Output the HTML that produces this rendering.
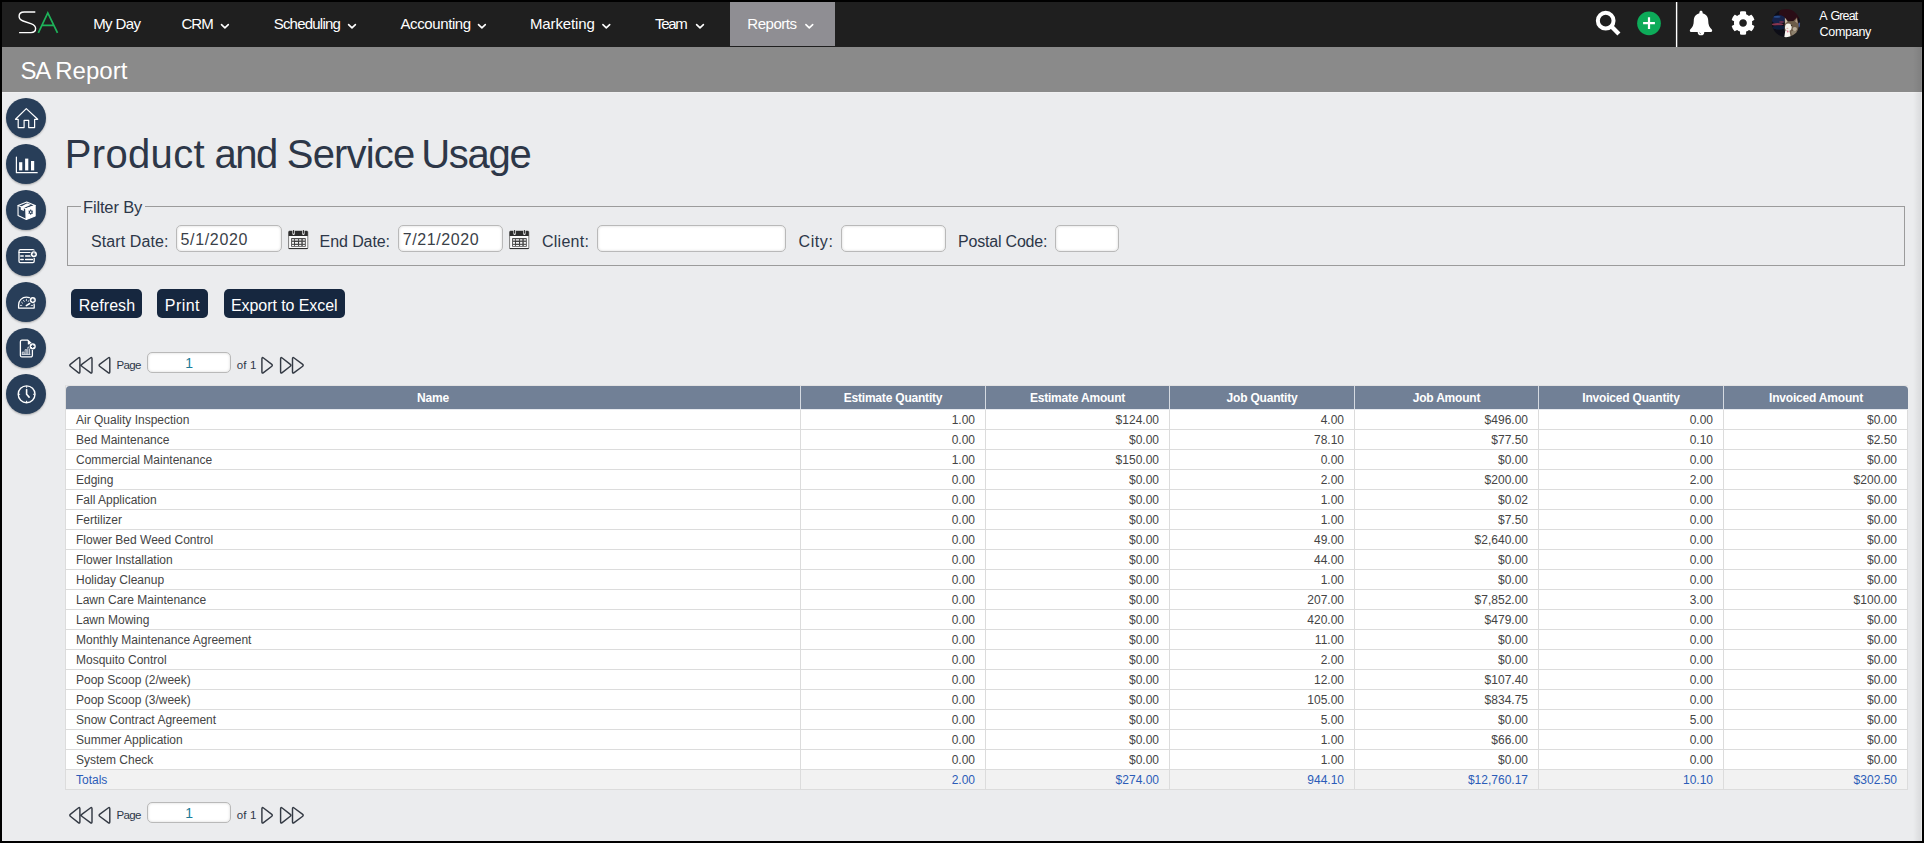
<!DOCTYPE html>
<html lang="en">
<head>
<meta charset="utf-8">
<title>SA Report - Product and Service Usage</title>
<style>
html,body{margin:0;padding:0;}
body{width:1924px;height:843px;overflow:hidden;background:#ebecee;font-family:"Liberation Sans",sans-serif;position:relative;}
.abs{position:absolute;}
.t{position:absolute;white-space:pre;font-family:"Liberation Sans",sans-serif;}
#nav{left:0;top:0;width:1924px;height:47px;background:#1f1f1f;}
#sub{left:0;top:47px;width:1924px;height:45px;background:#8a8a8a;}
#reports{left:730px;top:2px;width:105px;height:44px;background:#8f8e93;}
#vline{left:1676px;top:2px;width:2px;height:45px;background:#f4f4f4;}
.frame{position:absolute;background:#000;z-index:50;}
.side{position:absolute;left:6px;width:40px;height:40px;border-radius:50%;background:#283e59;box-shadow:0 1px 2px rgba(0,0,0,.28);}
.side svg{position:absolute;left:0;top:0;width:40px;height:40px;}
fieldset{position:absolute;left:67px;top:206px;width:1836px;height:58px;margin:0;padding:0;border:1px solid #9b9b9b;box-sizing:content-box;}
.inp{position:absolute;height:25px;top:225px;background:#fff;border:1px solid #b9b9b9;border-radius:5px;box-shadow:inset 0 0 3px rgba(0,0,0,.16);}
.btn{position:absolute;top:289px;height:29px;background:#16273f;border-radius:5px;}
.pinp{position:absolute;left:147px;width:82px;height:19px;background:#fff;border:1px solid #b9b9b9;border-radius:5px;box-shadow:inset 0 0 3px rgba(0,0,0,.16);}
table.grid{position:absolute;left:65px;top:385px;width:1843px;border-left:1px solid #dcdcdc;border-top:1px solid #e2e2e3;border-collapse:separate;border-spacing:0;table-layout:fixed;font-size:12px;color:#444;}
table.grid th{height:24px;padding:0;background:#718096;color:#fff;font-weight:700;font-size:12px;text-align:center;border-left:1px solid #d5dae1;border-bottom:1px solid #e6e9ee;box-sizing:border-box;letter-spacing:-0.2px;}
table.grid th:first-child{border-left:none;border-top-left-radius:4px;}
table.grid th:last-child{border-top-right-radius:4px;}
table.grid td{height:20px;padding:0 10px 0 0;background:#fff;text-align:right;border-left:1px solid #dcdcdc;border-bottom:1px solid #dcdcdc;box-sizing:border-box;line-height:17px;padding-top:2px;white-space:nowrap;}
table.grid td.n{text-align:left;padding:2px 0 0 10px;border-left:none;}
table.grid tr.tot td{background:#f2f2f2;color:#2b5cb8;}
table.grid td:last-child{border-right:1px solid #dcdcdc;}
</style>
</head>
<body>
<div id="nav" class="abs"></div>
<div id="reports" class="abs"></div>
<div id="sub" class="abs"></div>
<svg class="abs" style="left:0;top:0" width="1924" height="47" viewBox="0 0 1924 47">
<path d="M35.300 12H24.200C21.100 12 19.100 13.700 19.100 16.300 19.100 18.700 20.500 20.100 23.100 21L31.500 23.800C34.200 24.700 35.600 26.200 35.600 28.600 35.600 31.200 33.800 32.600 31 32.600H19.100" fill="none" stroke="#fff" stroke-width="1.400"/>
<path d="M38.300 32.900L47.800 12.900 57.500 32.900M41.900 25.300H53.800" fill="none" stroke="#1eb35a" stroke-width="1.700" stroke-linejoin="miter" stroke-miterlimit="10"/>
<g fill="none" stroke="#fff" stroke-width="1.600" stroke-linecap="round" stroke-linejoin="round"><path d="M221.5 24.600l3.400 3.300 3.400-3.300"/><path d="M348.6 24.600l3.400 3.300 3.400-3.300"/><path d="M478.5 24.600l3.400 3.300 3.400-3.300"/><path d="M602.9 24.600l3.400 3.300 3.400-3.300"/><path d="M696.6 24.600l3.400 3.300 3.400-3.300"/><path d="M805.9 24.600l3.400 3.300 3.400-3.300"/></g>
<rect x="1675.900" y="2" width="1.400" height="45" fill="#fff"/>
<circle cx="1605.700" cy="20.700" r="7.850" fill="none" stroke="#fff" stroke-width="4"/>
<path d="M1611 26L1618.900 33.900" stroke="#fff" stroke-width="4.300" stroke-linecap="butt"/>
<circle cx="1649" cy="23.300" r="11.850" fill="#0dab59"/>
<path d="M1649 17.300v11.800M1643.100 23.200h11.800" stroke="#fff" stroke-width="2.200"/>
<path fill="#fff" d="M1701 10.700c.9 0 1.600.7 1.600 1.600v.9c3.300.8 5.600 3.600 5.600 7.300 0 4.600 1.300 7 3.600 8.900.7.600.5 2.700-.9 2.700h-19.800c-1.400 0-1.600-2.100-.9-2.700 2.300-1.900 3.600-4.300 3.600-8.900 0-3.700 2.300-6.500 5.600-7.300v-.9c0-.9.7-1.600 1.600-1.600z"/>
<path fill="#fff" d="M1697.700 31.900a3.300 3.400 0 0 0 6.600 0z"/>
<path d="M1699.300 32.700l1.500 1.100" stroke="#1f1f1f" stroke-width=".6"/>
<g transform="translate(1730.900 10.800) scale(0.0475)">
<path fill="#fff" d="M487.400 315.700l-42.600-24.600c4.300-23.200 4.300-47 0-70.200l42.600-24.600c4.900-2.800 7.100-8.600 5.500-14-11.100-35.600-30-67.800-54.700-94.600-3.800-4.100-10-5.100-14.800-2.300L380.800 110c-17.900-15.400-38.500-27.300-60.800-35.100V25.800c0-5.600-3.900-10.500-9.400-11.700-36.700-8.200-74.300-7.800-109.200 0-5.500 1.200-9.400 6.100-9.400 11.700V75c-22.200 7.900-42.800 19.800-60.800 35.100L88.700 85.500c-4.900-2.800-11-1.900-14.800 2.300-24.700 26.700-43.600 58.900-54.700 94.600-1.700 5.400.6 11.200 5.500 14L67.300 221c-4.300 23.200-4.300 47 0 70.200l-42.600 24.600c-4.900 2.800-7.100 8.600-5.500 14 11.100 35.600 30 67.800 54.700 94.600 3.800 4.100 10 5.100 14.800 2.300l42.600-24.600c17.900 15.400 38.500 27.300 60.800 35.100v49.200c0 5.600 3.900 10.500 9.400 11.700 36.700 8.200 74.300 7.800 109.200 0 5.500-1.200 9.400-6.100 9.400-11.700v-49.200c22.200-7.900 42.800-19.800 60.800-35.100l42.600 24.600c4.900 2.800 11 1.900 14.800-2.300 24.700-26.700 43.600-58.900 54.700-94.600 1.500-5.500-.7-11.300-5.600-14.100zM256 336c-44.100 0-80-35.900-80-80s35.900-80 80-80 80 35.900 80 80-35.900 80-80 80z"/>
</g>
<defs><clipPath id="av"><circle cx="1786" cy="23.100" r="14.100"/></clipPath>
<filter id="avb" x="-10%" y="-10%" width="120%" height="120%"><feGaussianBlur stdDeviation="0.55"/></filter></defs>
<g clip-path="url(#av)"><g filter="url(#avb)">
<rect x="1770" y="7" width="32" height="32" fill="#100b16"/>
<ellipse cx="1790" cy="13.500" rx="11" ry="7.500" fill="#2b0a12"/>
<ellipse cx="1778.500" cy="19.500" rx="7" ry="4.500" fill="#13244a"/>
<ellipse cx="1777.500" cy="24.300" rx="6" ry="1.300" fill="#873650"/>
<ellipse cx="1779" cy="27.500" rx="6.500" ry="2.200" fill="#0f1c3a"/>
<ellipse cx="1781.500" cy="22" rx="2.500" ry="1" fill="#6a2c4c"/>
<ellipse cx="1777" cy="16.800" rx="3.500" ry=".9" fill="#2c4f8e"/>
<ellipse cx="1799.500" cy="25" rx="1.600" ry="2.600" fill="#3f5696"/>
<path d="M1784.800 17.400l3.200 3.800 5.300-.3 3.700-3.700 1.400 6.300c.6 3 .2 6-1.300 8.400l-2.600 3.200-6.700 2.800-3.200-8z" fill="#6d5b49"/>
<path d="M1796.600 18.200l1.100 5.200-2.600-1.800z" fill="#b39a84"/>
<path d="M1785 18l2.600 3.600-2.500 2.200z" fill="#cdbba6"/>
<ellipse cx="1788.300" cy="27.300" rx="3.300" ry="3.800" fill="#f3f0ea"/>
<path d="M1785.300 30.500h4.200l1.400 7.500h-6.700z" fill="#f7f5f1"/>
<path d="M1791 31.500l4.500-1.500 1.500 2.500-5 3z" fill="#8c806c"/>
<ellipse cx="1794.800" cy="29" rx="2.200" ry="2" fill="#b7ab98"/>
<ellipse cx="1787.400" cy="28.300" rx="1" ry=".55" fill="#d9a09a"/>
<ellipse cx="1787.700" cy="31.400" rx=".9" ry="1" fill="#e27a95"/>
<circle cx="1791.600" cy="25.400" r=".7" fill="#3a3228"/>
</g></g>
</svg>
<div class="side" style="top:98px"><svg viewBox="0 0 40 40"><path fill="none" stroke="#fff" stroke-width="1.2" stroke-linejoin="round" stroke-linecap="round" d="M20.300 10.600L9.500 21.300h2.700v8.300h5.900v-7.300h4.600v7.300h5.900v-8.300h3.100z"/></svg></div>
<div class="side" style="top:144px"><svg viewBox="0 0 40 40"><path fill="none" stroke="#fff" stroke-width="1.2" stroke-linejoin="round" stroke-linecap="round" d="M10.400 13v15.700h20.800"/><rect x="13.100" y="18.200" width="3.200" height="8.200" fill="#fff"/><rect x="19.100" y="14.600" width="3.200" height="11.800" fill="#fff"/><rect x="25" y="17" width="3.200" height="9.400" fill="#fff"/></svg></div>
<div class="side" style="top:190px"><svg viewBox="0 0 40 40"><g transform="translate(20.6 20.7) scale(.91) translate(-20.6 -20.6)"><path fill="none" stroke="#fff" stroke-width="1.2" stroke-linejoin="round" stroke-linecap="round" d="M11.200 15L20.700 11.100 30 15 19.900 18.400z"/><path fill="none" stroke="#fff" stroke-width="1.2" stroke-linejoin="round" stroke-linecap="round" d="M11.200 15v11l9.100 4.200-.4-11.800"/><path fill="#fff" stroke="#fff" stroke-width="1.200" stroke-linejoin="round" d="M19.900 18.400L30 15v11.400l-9.700 3.800z"/><path fill="#fff" d="M14.200 16.200l3.400 1.300 7.700-3.400-4.100-1.800z"/><path fill="#fff" d="M14.200 16.200v3.400l3.400 1.400v-3.500z"/><circle cx="25.100" cy="22.200" r="2" fill="#283e59"/><path stroke="#283e59" stroke-width="1.100" d="M25.100 19.400v5.600M22.700 20.800l4.800 2.800M22.700 23.600l4.800-2.800"/><circle cx="25.100" cy="22.200" r=".9" fill="#fff"/></g></svg></div>
<div class="side" style="top:236px"><svg viewBox="0 0 40 40"><rect fill="none" stroke="#fff" stroke-width="1.3" stroke-linejoin="round" stroke-linecap="round" x="13" y="13.600" width="15.200" height="13" rx="1.300"/><path fill="none" stroke="#fff" stroke-width="1.2" stroke-linejoin="round" stroke-linecap="round" d="M13 16.500h12"/><path stroke="#fff" stroke-width="1.500" stroke-linecap="round" d="M14.800 20.100h2.400M19.600 20.100h4.700M14.800 23.600h2.400M19.600 23.600h6.800"/><circle cx="27.9" cy="18.2" r="3.700" fill="#283e59"/><circle cx="27.9" cy="18.2" r="3.050" fill="#fff"/><path stroke="#283e59" stroke-width="1.150" d="M27.9 16.6v3.200M26.3 18.2h3.200"/></svg></div>
<div class="side" style="top:282px"><svg viewBox="0 0 40 40"><path fill="none" stroke="#fff" stroke-width="1.3" stroke-linejoin="round" stroke-linecap="round" d="M12.600 26.100v-3.200a7.800 7.800 0 0 1 15.600 0v3.200z"/><path stroke="#fff" stroke-width="1.500" stroke-linecap="round" d="M20.300 23.600l3.400-2.100"/><path stroke="#e4e8ee" stroke-width=".9" stroke-linecap="round" d="M14.400 23.400h1.400M15.600 20.300l1 .9M17.500 18.300l.8 1.200M20.400 17.200v1.500M23 18.400l-.7 1.100M25.200 23.400h1.400"/><circle cx="26.8" cy="18.1" r="3.700" fill="#283e59"/><circle cx="26.8" cy="18.1" r="3.050" fill="#fff"/><path stroke="#283e59" stroke-width="1.150" d="M26.8 16.5v3.200M25.2 18.1h3.200"/></svg></div>
<div class="side" style="top:328px"><svg viewBox="0 0 40 40"><path fill="none" stroke="#fff" stroke-width="1.3" stroke-linejoin="round" stroke-linecap="round" d="M15.900 12.200h5.900l4.600 4.300v10.900a1.500 1.500 0 0 1-1.500 1.500h-9a1.500 1.500 0 0 1-1.500-1.500v-13.700a1.500 1.500 0 0 1 1.500-1.500z"/><path fill="#fff" d="M21.800 12.200l4.600 4.300h-4.600z"/><path fill="none" stroke="#e4e8ee" stroke-width=".9" d="M16.300 26.400v-2.300h1.700v2.300M19.100 26.400v-4.700h1.700v4.700M21.900 26.400v-7.200h1.700v7.200M15.800 26.400h8.600"/><circle cx="26.7" cy="18.4" r="3.700" fill="#283e59"/><circle cx="26.7" cy="18.4" r="3.050" fill="#fff"/><path stroke="#283e59" stroke-width="1.150" d="M26.7 16.8v3.200M25.1 18.4h3.200"/></svg></div>
<div class="side" style="top:374px"><svg viewBox="0 0 40 40"><circle fill="none" stroke="#fff" stroke-width="1.4" stroke-linejoin="round" stroke-linecap="round" cx="20.600" cy="20.300" r="8.400"/><path fill="none" stroke="#fff" stroke-width="1.6" stroke-linejoin="round" stroke-linecap="round" d="M20.600 15.600v4.700l2.500 2.800"/><path stroke="#fff" stroke-width="1.100" d="M20.600 12.200v1.600M20.600 26.800v1.600M12.500 20.300h1.600M27.100 20.300h1.600"/></svg></div>
<fieldset></fieldset>
<div class="abs" style="left:81px;top:200px;width:64px;height:14px;background:#ebecee;"></div>
<div class="inp" style="left:176px;width:104px;"></div>
<div class="inp" style="left:398px;width:103px;"></div>
<div class="inp" style="left:597px;width:187px;"></div>
<div class="inp" style="left:841px;width:103px;"></div>
<div class="inp" style="left:1055px;width:62px;"></div>
<svg class="abs" style="left:288px;top:229px" width="21" height="21" viewBox="0 0 21 21"><rect x="0.600" y="2.100" width="19.200" height="17.600" rx="0.800" fill="#fbfbfb" stroke="#707070" stroke-width=".9"/><rect x="0.600" y="19" width="19.200" height="1" rx=".5" fill="#2e2e2e"/><path d="M0.600 7V3.200a1.100 1.100 0 0 1 1.100-1.100h17a1.100 1.100 0 0 1 1.100 1.100V7z" fill="#2c2c2c"/><rect x="3.100" y="9.100" width="14.700" height="8.700" rx=".6" fill="#4d4d4d"/><rect x="4.0" y="10.0" width="2.0" height="1.7" fill="#cfcfcf"/><rect x="4.0" y="12.9" width="2.0" height="1.9" fill="#f2f2f2"/><rect x="4.0" y="15.9" width="2.0" height="1.1" fill="#f2f2f2"/><rect x="6.9" y="10.0" width="3.1" height="1.7" fill="#cfcfcf"/><rect x="6.9" y="12.9" width="3.1" height="1.9" fill="#f2f2f2"/><rect x="6.9" y="15.9" width="3.1" height="1.1" fill="#f2f2f2"/><rect x="11.1" y="10.0" width="2.2" height="1.7" fill="#cfcfcf"/><rect x="11.1" y="12.9" width="2.2" height="1.9" fill="#f2f2f2"/><rect x="11.1" y="15.9" width="2.2" height="1.1" fill="#f2f2f2"/><rect x="14.8" y="10.0" width="2.1" height="1.7" fill="#cfcfcf"/><rect x="14.8" y="12.9" width="2.1" height="1.9" fill="#f2f2f2"/><rect x="14.8" y="15.9" width="2.1" height="1.1" fill="#f2f2f2"/><rect x="6.600" y="12.500" width="3.700" height="2.700" fill="none" stroke="#333" stroke-width=".6"/><path d="M5.600 1.600v3.200M15.400 1.600v3.200" stroke="#ececec" stroke-width="2.400" stroke-linecap="round"/><path d="M5.600 1.500v2.700M15.400 1.500v2.700" stroke="#222" stroke-width="1" stroke-linecap="round"/></svg><svg class="abs" style="left:509px;top:229px" width="21" height="21" viewBox="0 0 21 21"><rect x="0.600" y="2.100" width="19.200" height="17.600" rx="0.800" fill="#fbfbfb" stroke="#707070" stroke-width=".9"/><rect x="0.600" y="19" width="19.200" height="1" rx=".5" fill="#2e2e2e"/><path d="M0.600 7V3.200a1.100 1.100 0 0 1 1.100-1.100h17a1.100 1.100 0 0 1 1.100 1.100V7z" fill="#2c2c2c"/><rect x="3.100" y="9.100" width="14.700" height="8.700" rx=".6" fill="#4d4d4d"/><rect x="4.0" y="10.0" width="2.0" height="1.7" fill="#cfcfcf"/><rect x="4.0" y="12.9" width="2.0" height="1.9" fill="#f2f2f2"/><rect x="4.0" y="15.9" width="2.0" height="1.1" fill="#f2f2f2"/><rect x="6.9" y="10.0" width="3.1" height="1.7" fill="#cfcfcf"/><rect x="6.9" y="12.9" width="3.1" height="1.9" fill="#f2f2f2"/><rect x="6.9" y="15.9" width="3.1" height="1.1" fill="#f2f2f2"/><rect x="11.1" y="10.0" width="2.2" height="1.7" fill="#cfcfcf"/><rect x="11.1" y="12.9" width="2.2" height="1.9" fill="#f2f2f2"/><rect x="11.1" y="15.9" width="2.2" height="1.1" fill="#f2f2f2"/><rect x="14.8" y="10.0" width="2.1" height="1.7" fill="#cfcfcf"/><rect x="14.8" y="12.9" width="2.1" height="1.9" fill="#f2f2f2"/><rect x="14.8" y="15.9" width="2.1" height="1.1" fill="#f2f2f2"/><rect x="6.600" y="12.500" width="3.700" height="2.700" fill="none" stroke="#333" stroke-width=".6"/><path d="M5.600 1.600v3.200M15.400 1.600v3.200" stroke="#ececec" stroke-width="2.400" stroke-linecap="round"/><path d="M5.600 1.500v2.700M15.400 1.500v2.700" stroke="#222" stroke-width="1" stroke-linecap="round"/></svg>
<div class="btn" style="left:71px;width:71px;"></div>
<div class="btn" style="left:157px;width:51px;"></div>
<div class="btn" style="left:224px;width:121px;"></div>
<div class="pinp" style="top:352px;"></div>
<div class="pinp" style="top:802px;"></div>
<svg class="abs" style="left:0;top:0" width="320" height="843" viewBox="0 0 320 843"><path fill="none" stroke="#343a44" stroke-width="1.450" stroke-linejoin="round" d="M78.32 358.03Q79.90 356.80 79.90 358.80L79.90 371.80Q79.90 373.80 78.32 372.57L70.58 366.53Q69.00 365.30 70.58 364.07zM90.39 357.99Q92.00 356.80 92.00 358.80L92.00 371.80Q92.00 373.80 90.39 372.61L82.11 366.49Q80.50 365.30 82.11 364.11z"/><path fill="none" stroke="#343a44" stroke-width="1.450" stroke-linejoin="round" d="M108.19 357.99Q109.80 356.80 109.80 358.80L109.80 371.80Q109.80 373.80 108.19 372.61L99.91 366.49Q98.30 365.30 99.91 364.11z"/><path fill="none" stroke="#343a44" stroke-width="1.450" stroke-linejoin="round" d="M263.49 358.01Q261.90 356.80 261.90 358.80L261.90 371.80Q261.90 373.80 263.49 372.59L271.51 366.51Q273.10 365.30 271.51 364.09z"/><path fill="none" stroke="#343a44" stroke-width="1.450" stroke-linejoin="round" d="M282.18 358.02Q280.60 356.80 280.60 358.80L280.60 371.80Q280.60 373.80 282.18 372.58L290.02 366.52Q291.60 365.30 290.02 364.08zM294.11 357.99Q292.50 356.80 292.50 358.80L292.50 371.80Q292.50 373.80 294.11 372.61L302.39 366.49Q304.00 365.30 302.39 364.11z"/></svg><svg class="abs" style="left:0;top:0" width="320" height="843" viewBox="0 0 320 843"><path fill="none" stroke="#343a44" stroke-width="1.450" stroke-linejoin="round" d="M78.32 808.03Q79.90 806.80 79.90 808.80L79.90 821.80Q79.90 823.80 78.32 822.57L70.58 816.53Q69.00 815.30 70.58 814.07zM90.39 807.99Q92.00 806.80 92.00 808.80L92.00 821.80Q92.00 823.80 90.39 822.61L82.11 816.49Q80.50 815.30 82.11 814.11z"/><path fill="none" stroke="#343a44" stroke-width="1.450" stroke-linejoin="round" d="M108.19 807.99Q109.80 806.80 109.80 808.80L109.80 821.80Q109.80 823.80 108.19 822.61L99.91 816.49Q98.30 815.30 99.91 814.11z"/><path fill="none" stroke="#343a44" stroke-width="1.450" stroke-linejoin="round" d="M263.49 808.01Q261.90 806.80 261.90 808.80L261.90 821.80Q261.90 823.80 263.49 822.59L271.51 816.51Q273.10 815.30 271.51 814.09z"/><path fill="none" stroke="#343a44" stroke-width="1.450" stroke-linejoin="round" d="M282.18 808.02Q280.60 806.80 280.60 808.80L280.60 821.80Q280.60 823.80 282.18 822.58L290.02 816.52Q291.60 815.30 290.02 814.08zM294.11 807.99Q292.50 806.80 292.50 808.80L292.50 821.80Q292.50 823.80 294.11 822.61L302.39 816.49Q304.00 815.30 302.39 814.11z"/></svg>
<table class="grid"><colgroup><col style="width:734px"><col style="width:185px"><col style="width:184px"><col style="width:185px"><col style="width:184px"><col style="width:185px"><col style="width:185px"></colgroup>
<thead><tr><th>Name</th><th>Estimate Quantity</th><th>Estimate Amount</th><th>Job Quantity</th><th>Job Amount</th><th>Invoiced Quantity</th><th>Invoiced Amount</th></tr></thead><tbody>
<tr><td class="n">Air Quality Inspection</td><td>1.00</td><td>$124.00</td><td>4.00</td><td>$496.00</td><td>0.00</td><td>$0.00</td></tr>
<tr><td class="n">Bed Maintenance</td><td>0.00</td><td>$0.00</td><td>78.10</td><td>$77.50</td><td>0.10</td><td>$2.50</td></tr>
<tr><td class="n">Commercial Maintenance</td><td>1.00</td><td>$150.00</td><td>0.00</td><td>$0.00</td><td>0.00</td><td>$0.00</td></tr>
<tr><td class="n">Edging</td><td>0.00</td><td>$0.00</td><td>2.00</td><td>$200.00</td><td>2.00</td><td>$200.00</td></tr>
<tr><td class="n">Fall Application</td><td>0.00</td><td>$0.00</td><td>1.00</td><td>$0.02</td><td>0.00</td><td>$0.00</td></tr>
<tr><td class="n">Fertilizer</td><td>0.00</td><td>$0.00</td><td>1.00</td><td>$7.50</td><td>0.00</td><td>$0.00</td></tr>
<tr><td class="n">Flower Bed Weed Control</td><td>0.00</td><td>$0.00</td><td>49.00</td><td>$2,640.00</td><td>0.00</td><td>$0.00</td></tr>
<tr><td class="n">Flower Installation</td><td>0.00</td><td>$0.00</td><td>44.00</td><td>$0.00</td><td>0.00</td><td>$0.00</td></tr>
<tr><td class="n">Holiday Cleanup</td><td>0.00</td><td>$0.00</td><td>1.00</td><td>$0.00</td><td>0.00</td><td>$0.00</td></tr>
<tr><td class="n">Lawn Care Maintenance</td><td>0.00</td><td>$0.00</td><td>207.00</td><td>$7,852.00</td><td>3.00</td><td>$100.00</td></tr>
<tr><td class="n">Lawn Mowing</td><td>0.00</td><td>$0.00</td><td>420.00</td><td>$479.00</td><td>0.00</td><td>$0.00</td></tr>
<tr><td class="n">Monthly Maintenance Agreement</td><td>0.00</td><td>$0.00</td><td>11.00</td><td>$0.00</td><td>0.00</td><td>$0.00</td></tr>
<tr><td class="n">Mosquito Control</td><td>0.00</td><td>$0.00</td><td>2.00</td><td>$0.00</td><td>0.00</td><td>$0.00</td></tr>
<tr><td class="n">Poop Scoop (2/week)</td><td>0.00</td><td>$0.00</td><td>12.00</td><td>$107.40</td><td>0.00</td><td>$0.00</td></tr>
<tr><td class="n">Poop Scoop (3/week)</td><td>0.00</td><td>$0.00</td><td>105.00</td><td>$834.75</td><td>0.00</td><td>$0.00</td></tr>
<tr><td class="n">Snow Contract Agreement</td><td>0.00</td><td>$0.00</td><td>5.00</td><td>$0.00</td><td>5.00</td><td>$0.00</td></tr>
<tr><td class="n">Summer Application</td><td>0.00</td><td>$0.00</td><td>1.00</td><td>$66.00</td><td>0.00</td><td>$0.00</td></tr>
<tr><td class="n">System Check</td><td>0.00</td><td>$0.00</td><td>1.00</td><td>$0.00</td><td>0.00</td><td>$0.00</td></tr>
<tr class="tot"><td class="n">Totals</td><td>2.00</td><td>$274.00</td><td>944.10</td><td>$12,760.17</td><td>10.10</td><td>$302.50</td></tr>
</tbody></table>
<span class="t" style="left:93.20px;top:14.6px;font-size:15px;line-height:18px;color:#fff;letter-spacing:-0.587px;">My Day</span>
<span class="t" style="left:181.50px;top:14.6px;font-size:15px;line-height:18px;color:#fff;letter-spacing:-0.983px;">CRM</span>
<span class="t" style="left:273.70px;top:14.6px;font-size:15px;line-height:18px;color:#fff;letter-spacing:-0.787px;">Scheduling</span>
<span class="t" style="left:400.50px;top:14.6px;font-size:15px;line-height:18px;color:#fff;letter-spacing:-0.397px;">Accounting</span>
<span class="t" style="left:530.00px;top:14.6px;font-size:15px;line-height:18px;color:#fff;letter-spacing:-0.127px;">Marketing</span>
<span class="t" style="left:655.00px;top:14.6px;font-size:15px;line-height:18px;color:#fff;letter-spacing:-1.295px;">Team</span>
<span class="t" style="left:747.30px;top:14.6px;font-size:15px;line-height:18px;color:#fff;letter-spacing:-0.470px;">Reports</span>
<span class="t" style="left:1819.20px;top:9.2px;font-size:12.5px;line-height:15px;color:#fff;">A</span>
<span class="t" style="left:1830.40px;top:9.2px;font-size:12.5px;line-height:15px;color:#fff;letter-spacing:-0.847px;">Great</span>
<span class="t" style="left:1819.50px;top:24.8px;font-size:12.5px;line-height:15px;color:#fff;letter-spacing:-0.275px;">Company</span>
<span class="t" style="left:20.40px;top:56.2px;font-size:24px;line-height:29px;color:#fff;letter-spacing:-1.208px;">SA</span>
<span class="t" style="left:55.20px;top:56.2px;font-size:24px;line-height:29px;color:#fff;letter-spacing:0.047px;">Report</span>
<span class="t" style="left:64.70px;top:130.1px;font-size:40px;line-height:48px;color:#2d3748;letter-spacing:0.360px;">Product</span>
<span class="t" style="left:214.60px;top:130.1px;font-size:40px;line-height:48px;color:#2d3748;letter-spacing:-1.546px;">and</span>
<span class="t" style="left:286.80px;top:130.1px;font-size:40px;line-height:48px;color:#2d3748;letter-spacing:-0.822px;">Service</span>
<span class="t" style="left:421.20px;top:130.1px;font-size:40px;line-height:48px;color:#2d3748;letter-spacing:-1.245px;">Usage</span>
<span class="t" style="left:83.00px;top:197.3px;font-size:16.5px;line-height:20px;color:#2d3748;letter-spacing:-0.157px;">Filter By</span>
<span class="t" style="left:91.00px;top:231.8px;font-size:16px;line-height:19px;color:#2d3748;letter-spacing:0.097px;">Start Date:</span>
<span class="t" style="left:180.50px;top:230.0px;font-size:16px;line-height:19px;color:#3a3f48;letter-spacing:0.660px;">5/1/2020</span>
<span class="t" style="left:319.60px;top:231.8px;font-size:16px;line-height:19px;color:#2d3748;letter-spacing:-0.089px;">End Date:</span>
<span class="t" style="left:402.80px;top:230.0px;font-size:16px;line-height:19px;color:#3a3f48;letter-spacing:0.577px;">7/21/2020</span>
<span class="t" style="left:542.00px;top:231.8px;font-size:16px;line-height:19px;color:#2d3748;letter-spacing:0.249px;">Client:</span>
<span class="t" style="left:798.60px;top:231.8px;font-size:16px;line-height:19px;color:#2d3748;letter-spacing:0.561px;">City:</span>
<span class="t" style="left:958.00px;top:231.8px;font-size:16px;line-height:19px;color:#2d3748;letter-spacing:-0.197px;">Postal Code:</span>
<span class="t" style="left:78.70px;top:296.0px;font-size:16px;line-height:19px;color:#fff;letter-spacing:0.062px;">Refresh</span>
<span class="t" style="left:164.80px;top:296.0px;font-size:16px;line-height:19px;color:#fff;letter-spacing:0.437px;">Print</span>
<span class="t" style="left:231.00px;top:296.0px;font-size:16px;line-height:19px;color:#fff;letter-spacing:-0.075px;">Export to Excel</span>
<span class="t" style="left:116.40px;top:357.7px;font-size:11.5px;line-height:14px;color:#2d3748;letter-spacing:-0.621px;">Page</span>
<span class="t" style="left:185.20px;top:354.6px;font-size:14px;line-height:17px;color:#1b7b98;">1</span>
<span class="t" style="left:236.80px;top:357.7px;font-size:11.5px;line-height:14px;color:#2d3748;letter-spacing:0.138px;">of 1</span>
<span class="t" style="left:116.40px;top:807.7px;font-size:11.5px;line-height:14px;color:#2d3748;letter-spacing:-0.621px;">Page</span>
<span class="t" style="left:185.20px;top:804.6px;font-size:14px;line-height:17px;color:#1b7b98;">1</span>
<span class="t" style="left:236.80px;top:807.7px;font-size:11.5px;line-height:14px;color:#2d3748;letter-spacing:0.138px;">of 1</span>
<div class="abs" style="left:2px;top:92px;width:1920px;height:1px;background:#f0f0f1;"></div>
<div class="abs" style="left:1913px;top:47px;width:8px;height:794px;background:linear-gradient(to right,rgba(0,0,0,0),rgba(0,0,0,.075));"></div>
<div class="abs" style="left:1921px;top:92px;width:1px;height:749px;background:#e8e8e9;"></div>
<div class="frame" style="left:0;top:0;width:1924px;height:2px;"></div>
<div class="frame" style="left:0;top:841px;width:1924px;height:2px;"></div>
<div class="frame" style="left:0;top:0;width:2px;height:843px;"></div>
<div class="frame" style="left:1922px;top:0;width:2px;height:843px;"></div>
</body>
</html>
